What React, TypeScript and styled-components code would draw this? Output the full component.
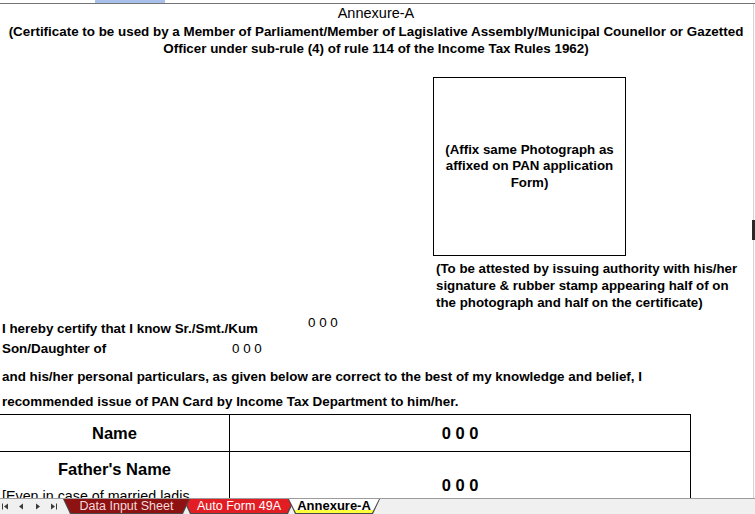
import * as React from 'react';
import styled, { createGlobalStyle } from 'styled-components';

const GlobalStyle = createGlobalStyle`
  html, body {
    margin: 0;
    padding: 0;
    background: #ffffff;
    overflow: hidden;
  }
  body {
    font-family: "Liberation Sans", Arial, sans-serif;
    color: #000000;
  }
`;

const SWindow = styled.div`
  width: 755px;
  height: 514px;
  display: flex;
  flex-direction: column;
  overflow: hidden;
  background: #ffffff;
`;

const SHeaderEdge = styled.div`
  height: 3px;
  flex-shrink: 0;
  display: flex;
  border-bottom: 1px solid #747474;
`;

const SSelectedColumn = styled.div`
  margin-left: 95px;
  width: 70px;
  background: #a9c1ea;
`;

const SBody = styled.div`
  flex: 1;
  min-height: 0;
  display: flex;
  overflow: hidden;
`;

const SSheet = styled.div`
  flex: 1;
  min-width: 0;
  overflow: hidden;
`;

const SScrollEdge = styled.div`
  width: 1px;
  flex-shrink: 0;
  border-left: 1px solid #d4d4d4;
  position: relative;
`;

const SSplitMark = styled.div`
  position: absolute;
  left: -2px;
  top: 216px;
  width: 3px;
  height: 20px;
  background: #2a2a2a;
`;

const STitle = styled.div`
  width: 752px;
  text-align: center;
  font-size: 13.4px;
`;

const SAnnexure = styled.div`
  font-size: 14.5px;
  line-height: 19px;
`;

const SCaption = styled.div`
  line-height: 17px;
  font-weight: bold;
  white-space: nowrap;
`;

const SPhotoBox = styled.div`
  margin: 20px 0 0 433px;
  width: 193px;
  height: 179px;
  box-sizing: border-box;
  border: 1px solid #000000;
  display: flex;
  align-items: center;
  justify-content: center;
  text-align: center;
  font-size: 13.3px;
  font-weight: bold;
  line-height: 16.5px;
  white-space: nowrap;
`;

const SAttest = styled.div`
  margin: 3.5px 0 0 436px;
  font-size: 13.3px;
  font-weight: bold;
  line-height: 17px;
  white-space: nowrap;
`;

interface ICertRow {
  $top: number
  $h: number
}

const SCertRow = styled.div<ICertRow>`
  display: flex;
  margin-top: ${({ $top }) => $top}px;
  height: ${({ $h }) => $h}px;
  font-size: 13.4px;
  line-height: 17px;
`;

const SCertLabel = styled.div<{ $w: number }>`
  width: ${({ $w }) => $w}px;
  flex-shrink: 0;
  box-sizing: border-box;
  padding-left: 2px;
  align-self: flex-end;
  font-weight: bold;
  white-space: nowrap;
`;

const SCertValue = styled.div<{ $align: string }>`
  align-self: ${({ $align }) => $align};
  white-space: nowrap;
`;

const SPara = styled.div<{ $top: number }>`
  margin-top: ${({ $top }) => $top}px;
  padding-left: 2px;
  font-size: 13.4px;
  font-weight: bold;
  line-height: 17px;
  white-space: nowrap;
`;

const STable = styled.div`
  margin-top: 4.5px;
  width: 691px;
  display: grid;
  grid-template-columns: 230px 461px;
  border-top: 1px solid #000000;
`;

const SCell = styled.div<{ $h: number }>`
  height: ${({ $h }) => $h}px;
  box-sizing: border-box;
  border-right: 1px solid #000000;
  border-bottom: 1px solid #000000;
  display: flex;
  flex-direction: column;
  align-items: center;
  justify-content: center;
  font-size: 16.5px;
  font-weight: bold;
`;

const SStackCell = styled(SCell)`
  justify-content: flex-start;
  align-items: stretch;
  overflow: hidden;
`;

const SFieldTitle = styled.div`
  margin-top: 7px;
  line-height: 20px;
  text-align: center;
`;

const SFieldNote = styled.div`
  margin-top: 8.5px;
  padding-left: 2px;
  width: 205px;
  font-size: 14.3px;
  font-weight: normal;
  line-height: 17px;
`;

const STabBar = styled.div`
  height: 16px;
  flex-shrink: 0;
  box-sizing: border-box;
  border-top: 1px solid #9c9c9c;
  background: #f0f0f0;
  display: flex;
  align-items: stretch;
`;

const SNavButtons = styled.div`
  width: 63px;
  flex-shrink: 0;
  display: flex;
  align-items: center;
  gap: 9px;
  padding-left: 2px;
  box-sizing: border-box;
  color: #3a3a3a;
`;

interface ITabStyle {
  $w: number
  $z: number
  $first?: boolean
}

const STabEdge = styled.div<ITabStyle>`
  width: ${({ $w }) => $w}px;
  margin-left: ${({ $first }) => ($first ? 0 : -7)}px;
  flex-shrink: 0;
  position: relative;
  z-index: ${({ $z }) => $z};
  background: #4a4a4a;
  clip-path: polygon(0 0, 100% 0, calc(100% - 7px) 100%, 7px 100%);
  padding: 0 1px 1px 1px;
  box-sizing: border-box;
  display: flex;
`;

const STabFace = styled.div<{ $bg: string; $fg: string; $active?: boolean }>`
  flex: 1;
  clip-path: polygon(0 0, 100% 0, calc(100% - 7px) 100%, 7px 100%);
  background: ${({ $bg, $active }) =>
    $active ? `linear-gradient(to bottom, #ffffff 0, #ffffff 11px, #ffff3c 11px)` : $bg};
  color: ${({ $fg }) => $fg};
  font-size: ${({ $active }) => ($active ? '13px' : '12.5px')};
  font-weight: ${({ $active }) => ($active ? 'bold' : 'normal')};
  line-height: 14px;
  text-align: center;
  white-space: nowrap;
`;

const STabTail = styled.div`
  flex: 1;
`;

const NavIcon = ({ dir, bar }: { dir: 'left' | 'right'; bar?: boolean }) => (
  <svg width="7" height="7" viewBox="0 0 7 7">
    {dir === 'left' ? (
      <>
        {bar && <rect x="0" y="0.5" width="1" height="6" fill="currentColor" />}
        <polygon points={bar ? '6,0.5 2,3.5 6,6.5' : '5,0.5 1,3.5 5,6.5'} fill="currentColor" />
      </>
    ) : (
      <>
        <polygon points={bar ? '1,0.5 5,3.5 1,6.5' : '2,0.5 6,3.5 2,6.5'} fill="currentColor" />
        {bar && <rect x="6" y="0.5" width="1" height="6" fill="currentColor" />}
      </>
    )}
  </svg>
);

const tabs = [
  { label: 'Data Input Sheet', bg: '#8e1212', fg: '#f6dada', w: 127, z: 2 },
  { label: 'Auto Form 49A', bg: '#e21d24', fg: '#ffffff', w: 112, z: 1 },
  { label: 'Annexure-A', bg: '#ffffff', fg: '#000000', w: 92, z: 3, active: true },
];

const App = () => {
  return (
    <SWindow>
      <GlobalStyle />
      <SHeaderEdge>
        <SSelectedColumn />
      </SHeaderEdge>
      <SBody>
        <SSheet>
          <STitle>
            <SAnnexure>Annexure-A</SAnnexure>
            <SCaption>
              (Certificate to be used by a Member of Parliament/Member of Lagislative Assembly/Municipal Counellor or Gazetted
              <br />
              Officer under sub-rule (4) of rule 114 of the Income Tax Rules 1962)
            </SCaption>
          </STitle>

          <SPhotoBox>
            <div>
              (Affix same Photograph as
              <br />
              affixed on PAN application
              <br />
              Form)
            </div>
          </SPhotoBox>
          <SAttest>
            (To be attested by issuing authority with his/her
            <br />
            signature &amp; rubber stamp appearing half of on
            <br />
            the photograph and half on the certificate)
          </SAttest>

          <SCertRow $top={3.5} $h={23}>
            <SCertLabel $w={308}>I hereby certify that I know Sr./Smt./Kum</SCertLabel>
            <SCertValue $align="flex-start">0 0 0</SCertValue>
          </SCertRow>
          <SCertRow $top={3} $h={17}>
            <SCertLabel $w={232}>Son/Daughter of</SCertLabel>
            <SCertValue $align="flex-end">0 0 0</SCertValue>
          </SCertRow>

          <SPara $top={10.5}>
            and his/her personal particulars, as given below are correct to the best of my knowledge and belief, I
          </SPara>
          <SPara $top={8}>recommended issue of PAN Card by Income Tax Department to him/her.</SPara>

          <STable>
            <SCell $h={37}>Name</SCell>
            <SCell $h={37}>0 0 0</SCell>
            <SStackCell $h={68}>
              <SFieldTitle>Father's Name</SFieldTitle>
              <SFieldNote>[Even in case of married ladis only father's name should be given]</SFieldNote>
            </SStackCell>
            <SCell $h={68}>0 0 0</SCell>
          </STable>
        </SSheet>
        <SScrollEdge>
          <SSplitMark />
        </SScrollEdge>
      </SBody>
      <STabBar>
        <SNavButtons>
          <NavIcon dir="left" bar />
          <NavIcon dir="left" />
          <NavIcon dir="right" />
          <NavIcon dir="right" bar />
        </SNavButtons>
        {tabs.map((t, i) => (
          <STabEdge key={t.label} $w={t.w} $z={t.z} $first={i === 0}>
            <STabFace $bg={t.bg} $fg={t.fg} $active={t.active}>
              {t.label}
            </STabFace>
          </STabEdge>
        ))}
        <STabTail />
      </STabBar>
    </SWindow>
  );
};

export default App;
